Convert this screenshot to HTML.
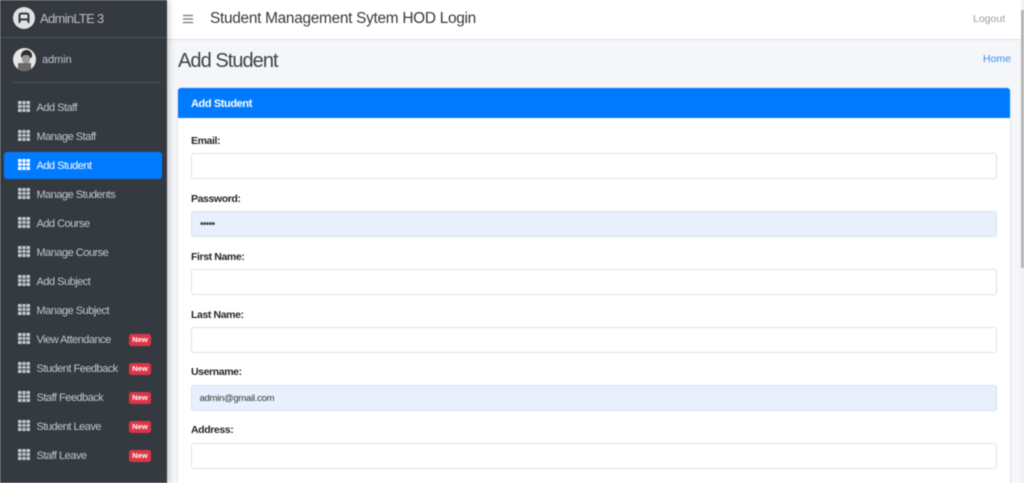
<!DOCTYPE html>
<html><head><meta charset="utf-8"><style>
html,body{margin:0;padding:0;width:1024px;height:483px;overflow:hidden;background:#f4f6f9;font-family:"Liberation Sans",sans-serif}
div,span,svg{position:absolute;white-space:nowrap}
#root{left:0;top:0;width:1024px;height:483px;overflow:hidden;filter:blur(.4px)}
.side{left:0;top:0;width:167px;height:483px;background:#343a40;box-shadow:2px 0 6px rgba(0,0,0,.2)}
.t{left:36.5px;color:#c2c7d0;font-size:11px;line-height:14px;letter-spacing:-.5px}
.ic{left:18px;width:12px;height:11px}
.b{left:129px;width:22px;height:12px;background:#dc3545;border-radius:2.5px;color:#fff;font-size:7.5px;font-weight:bold;line-height:12px;text-align:center}
.l{left:191px;color:#212529;font-size:10.5px;font-weight:bold;line-height:14px;letter-spacing:-.4px}
.i{left:191px;width:804px;height:24px;background:#fff;border:1px solid #dfe3e7;border-radius:3px}
.a{background:#e8f0fe;border-color:#d9e2ee}
</style></head><body><div id="root">
<div style="left:167px;top:0;width:857px;height:39px;background:#fff;border-bottom:1px solid #dee2e6"></div>
<svg style="left:183px;top:14px" width="10" height="10"><path d="M0 1.5H10M0 5H10M0 8.5H10" stroke="#6c757d" stroke-width="1.2"/></svg>
<div style="left:210px;top:9px;color:#343a40;font-size:15.4px;line-height:19px;letter-spacing:-.28px">Student Management Sytem HOD Login</div>
<div style="left:973px;top:12px;color:#9a9da0;font-size:10.5px;line-height:14px">Logout</div>
<div style="left:178px;top:49px;color:#3c4248;font-size:20px;line-height:25px;letter-spacing:-.95px">Add Student</div>
<div style="left:983px;top:52px;color:#3b8efb;font-size:10.5px;line-height:14px">Home</div>

<div style="left:178px;top:88px;width:832px;height:395px;background:#fff;border-radius:3px 3px 0 0;box-shadow:0 0 2px rgba(0,0,0,.18)"></div>
<div style="left:178px;top:88px;width:832px;height:30px;background:#007bff;border-radius:3px 3px 0 0"></div>
<div style="left:191px;top:97px;color:#fff;font-size:11px;line-height:14px;font-weight:bold;letter-spacing:-.4px">Add Student</div>

<div class="l" style="top:133.5px">Email:</div><div class="i" style="top:153px"></div>
<div class="l" style="top:191.5px">Password:</div><div class="i a" style="top:211px"></div>
<div style="left:200px;top:219px;color:#444;font-size:10px;line-height:12px;letter-spacing:-.6px;font-weight:bold">•••••</div>
<div class="l" style="top:249.5px">First Name:</div><div class="i" style="top:269px"></div>
<div class="l" style="top:307.5px">Last Name:</div><div class="i" style="top:327px"></div>
<div class="l" style="top:364.5px">Username:</div><div class="i a" style="top:385px"></div>
<div style="left:199.5px;top:391.5px;color:#2f3438;font-size:9.5px;line-height:14px;letter-spacing:-.27px">admin@gmail.com</div>
<div class="l" style="top:422.5px">Address:</div><div class="i" style="top:443px;height:23.5px"></div>

<div style="left:1021px;top:0;width:3px;height:483px;background:#f1f1f1"></div>
<div style="left:1021px;top:10px;width:3px;height:258px;background:#b4b4b4"></div>

<div class="side"></div>
<div style="left:0;top:37px;width:167px;height:1px;background:#4b545c"></div>
<div style="left:13px;top:7px;width:22px;height:22px;border-radius:50%;background:#dfe1e2"></div>
<svg style="left:18px;top:12px" width="12" height="12"><path d="M1.5 11V3.5Q1.5 1.5 3.5 1.5H8.5Q10.5 1.5 10.5 3.5V11M1.5 7.500H10.500" fill="none" stroke="#343a40" stroke-width="2"/></svg>
<div style="left:40px;top:10px;color:#b9bdc3;font-size:13px;line-height:17px;letter-spacing:-.7px">AdminLTE 3</div>
<div style="left:13px;top:48px;width:23px;height:23px;border-radius:50%;background:#e6e6e6;overflow:hidden">
<div style="left:8px;top:2px;width:11px;height:8px;border-radius:6px 6px 2px 2px;background:#2e2e2e"></div>
<div style="left:9px;top:7px;width:8px;height:8px;border-radius:3px;background:#999"></div>
<div style="left:5px;top:15px;width:13px;height:9px;background:#6b6b64"></div>
</div>
<div style="left:42px;top:53px;color:#c2c7d0;font-size:11px;line-height:14px;letter-spacing:-.1px">admin</div>
<div style="left:13px;top:82px;width:147px;height:1px;background:#4b545c"></div>
<div style="left:4px;top:152px;width:158px;height:26.5px;background:#007bff;border-radius:3px"></div>

<svg width="0" height="0"><defs><g id="g"><rect width="12" height="11" fill="currentColor"/><path d="M4 0V11M8 0V11M0 3.6H12M0 7.3H12" stroke="#343a40" stroke-width=".8"/></g></defs></svg>
<svg class="ic" style="top:101px;color:#c2c7d0"><use href="#g"/></svg><div class="t" style="top:101px">Add Staff</div>
<svg class="ic" style="top:130px;color:#c2c7d0"><use href="#g"/></svg><div class="t" style="top:130px">Manage Staff</div>
<svg class="ic" style="top:159px;color:#fff"><path d="M0 0H12V11H0Z" fill="#fff"/><path d="M4 0V11M8 0V11M0 3.6H12M0 7.3H12" stroke="#007bff" stroke-width=".8"/></svg><div class="t" style="top:159px;color:#fff">Add Student</div>
<svg class="ic" style="top:188px;color:#c2c7d0"><use href="#g"/></svg><div class="t" style="top:188px">Manage Students</div>
<svg class="ic" style="top:217px;color:#c2c7d0"><use href="#g"/></svg><div class="t" style="top:217px">Add Course</div>
<svg class="ic" style="top:246px;color:#c2c7d0"><use href="#g"/></svg><div class="t" style="top:246px">Manage Course</div>
<svg class="ic" style="top:275px;color:#c2c7d0"><use href="#g"/></svg><div class="t" style="top:275px">Add Subject</div>
<svg class="ic" style="top:304px;color:#c2c7d0"><use href="#g"/></svg><div class="t" style="top:304px">Manage Subject</div>
<svg class="ic" style="top:333px;color:#c2c7d0"><use href="#g"/></svg><div class="t" style="top:333px">View Attendance</div><div class="b" style="top:333.5px">New</div>
<svg class="ic" style="top:362px;color:#c2c7d0"><use href="#g"/></svg><div class="t" style="top:362px">Student Feedback</div><div class="b" style="top:362.5px">New</div>
<svg class="ic" style="top:391px;color:#c2c7d0"><use href="#g"/></svg><div class="t" style="top:391px">Staff Feedback</div><div class="b" style="top:391.5px">New</div>
<svg class="ic" style="top:420px;color:#c2c7d0"><use href="#g"/></svg><div class="t" style="top:420px">Student Leave</div><div class="b" style="top:420.5px">New</div>
<svg class="ic" style="top:449px;color:#c2c7d0"><use href="#g"/></svg><div class="t" style="top:449px">Staff Leave</div><div class="b" style="top:449.5px">New</div>
</div></body></html>
